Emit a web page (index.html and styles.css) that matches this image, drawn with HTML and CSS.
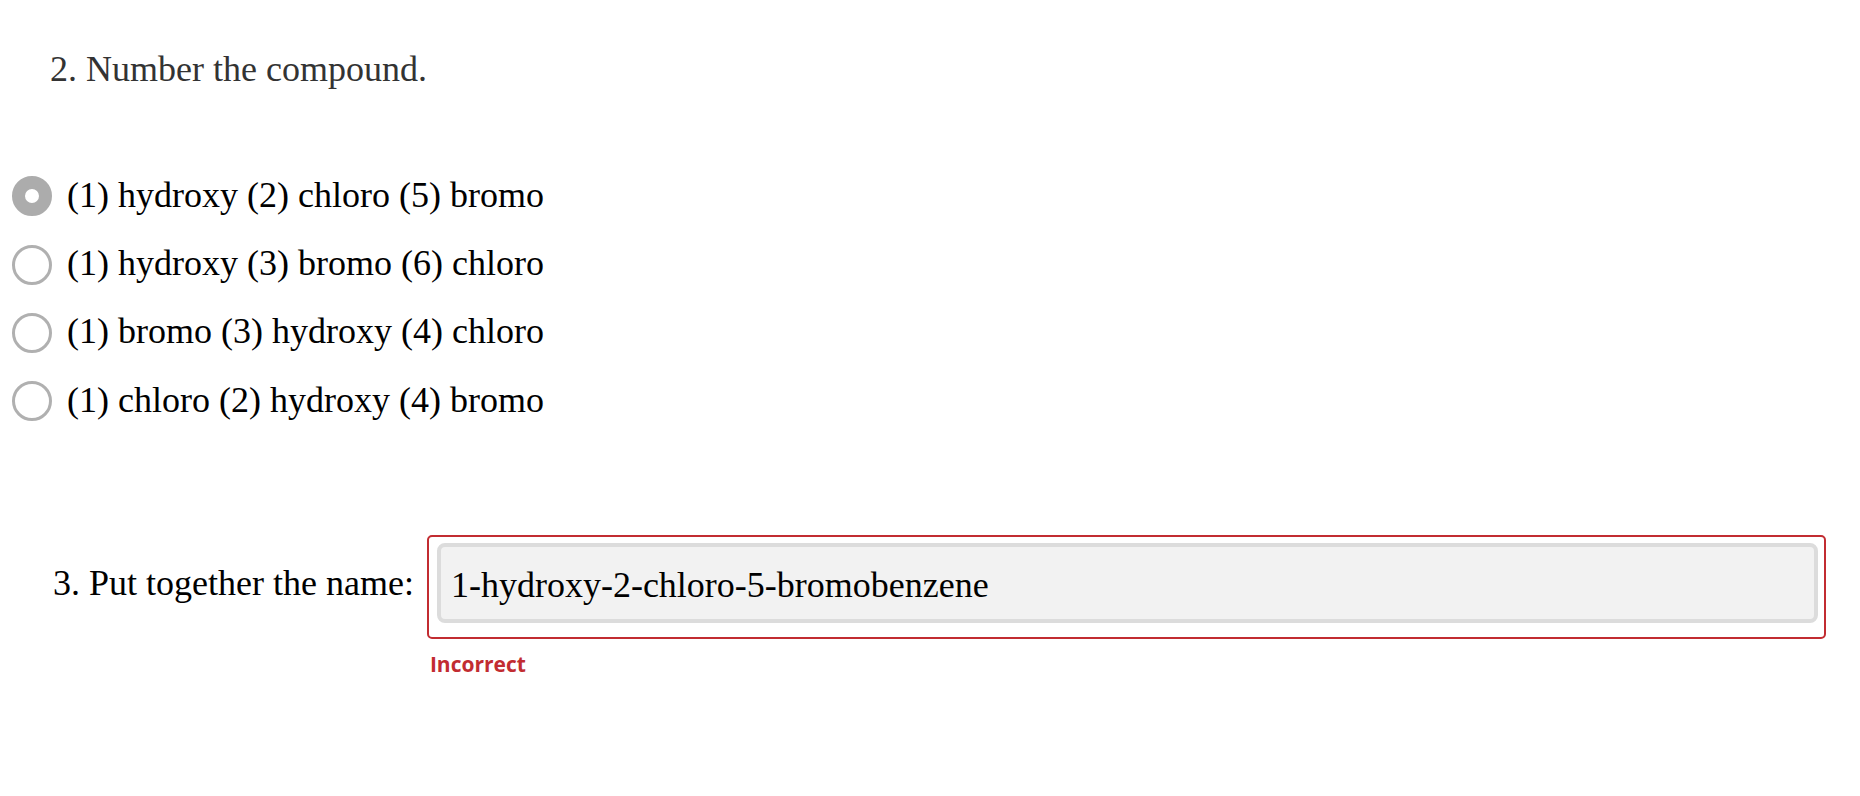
FILE: index.html
```html
<!DOCTYPE html>
<html lang="en">
<head>
<meta charset="utf-8">
<title>Number the compound</title>
<link rel="stylesheet" href="styles.css">
</head>
<body>
<main class="page">
  <section class="question">
    <h2 class="question-title">2. Number the compound.</h2>
    <div class="options">
      <label class="option"><input class="radio" type="radio" name="q2" checked><span class="option-text">(1) hydroxy (2) chloro (5) bromo</span></label>
      <label class="option"><input class="radio" type="radio" name="q2"><span class="option-text">(1) hydroxy (3) bromo (6) chloro</span></label>
      <label class="option"><input class="radio" type="radio" name="q2"><span class="option-text">(1) bromo (3) hydroxy (4) chloro</span></label>
      <label class="option"><input class="radio" type="radio" name="q2"><span class="option-text">(1) chloro (2) hydroxy (4) bromo</span></label>
    </div>
  </section>
  <section class="name-row">
    <label class="name-label" for="name">3. Put together the name:</label>
    <div class="answer">
      <div class="answer-box">
        <input id="name" class="answer-input" type="text" value="1-hydroxy-2-chloro-5-bromobenzene" readonly>
      </div>
      <div class="feedback">Incorrect</div>
    </div>
  </section>
</main>
</body>
</html>
```

FILE: styles.css
```css
html, body {
  margin: 0;
  padding: 0;
  background: #ffffff;
}

body {
  font-family: "Liberation Serif", "Times New Roman", serif;
  font-size: 36px;
  color: #000000;
}

.page {
  padding-top: 48px;
}

.question-title {
  margin: 0;
  padding-left: 50px;
  font-size: 36px;
  font-weight: normal;
  color: #333333;
}

.options {
  margin-top: 72px;
  padding-left: 12px;
  display: flex;
  flex-direction: column;
}

.option {
  display: flex;
  align-items: center;
  gap: 15px;
  height: 68.4px;
}

.radio {
  appearance: none;
  -webkit-appearance: none;
  margin: 0;
  width: 40px;
  height: 40px;
  flex: none;
  box-sizing: border-box;
  border: 3px solid #b0b0b0;
  border-radius: 50%;
  background: #ffffff;
}

.radio:checked {
  border: 13px solid #acacac;
}

.option-text {
  margin-top: -3px;
}

.name-row {
  margin-top: 99px;
  display: flex;
  align-items: flex-start;
  padding-left: 53px;
  padding-right: 34px;
}

.name-label {
  margin-top: 27px;
  margin-right: 13px;
  white-space: nowrap;
}

.answer {
  flex: 1;
  display: flex;
  flex-direction: column;
}

.answer-box {
  border: 2px solid #c22c31;
  border-radius: 5px;
  padding: 6px 6px 14px 8px;
}

.answer-input {
  display: block;
  width: 100%;
  box-sizing: border-box;
  height: 80px;
  margin: 0;
  padding: 5px 12px 0 10px;
  border: 4px solid #dcdcdc;
  border-radius: 8px;
  background: #f2f2f2;
  font-family: "Liberation Serif", "Times New Roman", serif;
  font-size: 36px;
  color: #000000;
  outline: none;
}

.feedback {
  margin-top: 11px;
  margin-left: 3px;
  font-family: "Open Sans", "Noto Sans", sans-serif;
  font-weight: 700;
  font-size: 21px;
  color: #c22c31;
}
```
